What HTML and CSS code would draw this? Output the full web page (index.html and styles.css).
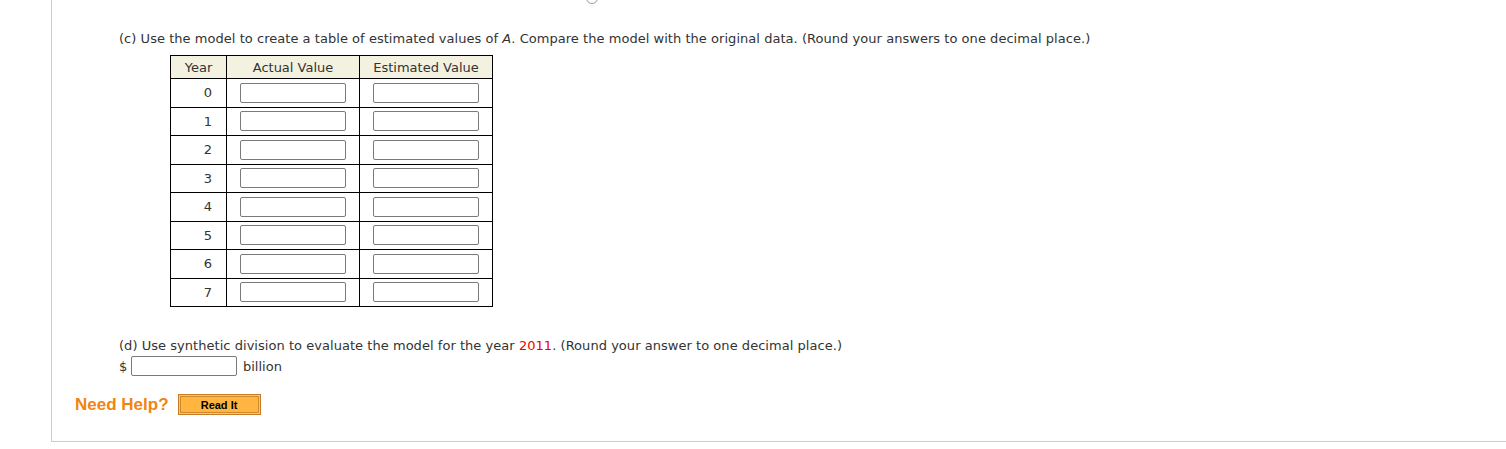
FILE: index.html
```html
<!DOCTYPE html>
<html>
<head>
<meta charset="utf-8">
<link rel="stylesheet" href="styles.css">
</head>
<body>
<div class="panel">
  <div class="topstrip"><span class="radio"></span></div>
  <div class="question">
    <p class="prompt">(c) Use the model to create a table of estimated values of <i>A</i>. Compare the model with the original data. (Round your answers to one decimal place.)</p>
    <table class="values">
      <thead>
        <tr><th class="c-year">Year</th><th class="c-val">Actual Value</th><th class="c-val">Estimated Value</th></tr>
      </thead>
      <tbody>
        <tr><td class="yr">0</td><td class="cell"><input type="text"></td><td class="cell"><input type="text"></td></tr>
        <tr><td class="yr">1</td><td class="cell"><input type="text"></td><td class="cell"><input type="text"></td></tr>
        <tr><td class="yr">2</td><td class="cell"><input type="text"></td><td class="cell"><input type="text"></td></tr>
        <tr><td class="yr">3</td><td class="cell"><input type="text"></td><td class="cell"><input type="text"></td></tr>
        <tr><td class="yr">4</td><td class="cell"><input type="text"></td><td class="cell"><input type="text"></td></tr>
        <tr><td class="yr">5</td><td class="cell"><input type="text"></td><td class="cell"><input type="text"></td></tr>
        <tr><td class="yr">6</td><td class="cell"><input type="text"></td><td class="cell"><input type="text"></td></tr>
        <tr><td class="yr">7</td><td class="cell"><input type="text"></td><td class="cell"><input type="text"></td></tr>
      </tbody>
    </table>
    <p class="prompt prompt-d">(d) Use synthetic division to evaluate the model for the year <span class="red">2011</span>. (Round your answer to one decimal place.)</p>
    <div class="answer"><span class="dollar">$</span><input type="text" class="ans-input"><span class="unit">billion</span></div>
  </div>
  <div class="help">
    <span class="need">Need Help?</span>
    <button class="readit" type="button">Read It</button>
  </div>
</div>
</body>
</html>
```
FILE: styles.css
```css
html, body {
  margin: 0;
  padding: 0;
  background: #fff;
}
body {
  font-family: "DejaVu Sans", Verdana, sans-serif;
  font-size: 13px;
  color: #333;
}
.panel {
  display: flow-root;
  margin-left: 51px;
  border-left: 1px solid #ccc;
  border-bottom: 1px solid #ccc;
  height: 442px;
  box-sizing: border-box;
  padding-left: 23px;
}
.topstrip {
  display: flow-root;
  height: 0;
  padding-left: 511px;
}
.radio {
  display: block;
  width: 12px;
  height: 12px;
  margin-top: -8px;
  border: 1px solid #999;
  border-radius: 50%;
  box-sizing: border-box;
}
.question {
  padding-left: 44px;
  padding-top: 30px;
}
.prompt {
  margin: 0;
  line-height: 18px;
  letter-spacing: 0.04px;
}
.red { color: #e00; }
.values {
  border-collapse: collapse;
  margin: 7px 0 0 51px;
  color: #333;
}
.values th {
  background: #f3f1df;
  font-weight: normal;
  border: 1px solid #000;
  height: 22px;
  padding: 0;
  text-align: center;
}
.c-year { width: 55px; }
.c-val { width: 132px; }
.values td {
  border: 1px solid #000;
  height: 27.5px;
  padding: 0;
}
.yr {
  text-align: right;
  padding-right: 14px !important;
}
.cell { text-align: center; }
.cell input, .ans-input {
  display: block;
  margin: 0 auto;
  width: 106px;
  height: 20px;
  box-sizing: border-box;
  border: 1px solid #7a7a7a;
  border-radius: 2px;
  padding: 0;
  background: #fff;
}
.prompt-d {
  margin-top: 30px;
}
.answer {
  display: flex;
  align-items: center;
  margin-top: 1px;
  height: 20px;
}
.dollar { width: 12px; }
.answer .ans-input { margin: 0; }
.unit { margin-left: 6px; }
.help {
  display: flex;
  align-items: center;
  margin-top: 18px;
  gap: 9px;
}
.need {
  font-family: "Liberation Sans", Arial, sans-serif;
  font-weight: bold;
  font-size: 17px;
  color: #f08511;
}
.readit {
  width: 83px;
  height: 21px;
  padding: 0;
  font-family: "Liberation Sans", Arial, sans-serif;
  font-weight: bold;
  font-size: 11px;
  color: #000;
  background: #ffb53f;
  border: 1px solid #c77b22;
  box-shadow: inset 0 0 0 1px #ffc862, inset 0 0 0 2px #d0892c;
}
```
